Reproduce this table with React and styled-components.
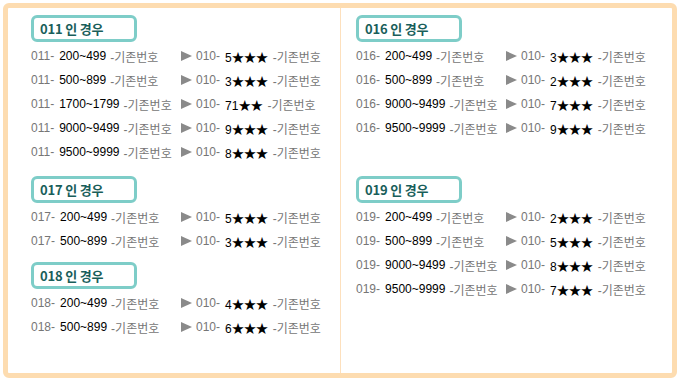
import React from "react";
import styled, { createGlobalStyle } from "styled-components";

const GlobalStyle = createGlobalStyle`
  html, body {
    margin: 0;
    padding: 0;
    background: #ffffff;
  }
  body {
    font-family: "Liberation Sans", "Noto Sans CJK KR", sans-serif;
  }
`;

const Frame = styled.div`
  margin: 3px;
  width: 674px;
  height: 375px;
  box-sizing: border-box;
  border: 5px solid #fddcb0;
  border-radius: 6px;
  display: grid;
  grid-template-columns: 333px 1fr;
  background: #fff;
`;

const Column = styled.div`
  display: flex;
  flex-direction: column;
  padding: 7px 0 0 ${(p) => p.$indent}px;
  border-right: ${(p) => (p.$divider ? "1px solid #fde0bd" : "none")};
`;

const Section = styled.section`
  margin-top: ${(p) => p.$top || 0}px;
`;

const Badge = styled.div`
  box-sizing: border-box;
  width: 106px;
  height: 27px;
  border: 3px solid #7ecdc8;
  border-radius: 6px;
  padding-left: 6px;
  margin-bottom: 2px;
  display: flex;
  align-items: center;
  font-family: "Noto Sans CJK KR", sans-serif;
  font-size: 13px;
  font-weight: 700;
  color: #195e5a;
  letter-spacing: -0.2px;
`;

const Row = styled.div`
  height: 24px;
  display: grid;
  grid-template-columns: 150px auto;
  align-items: center;
  font-size: 12px;
  color: #767676;
  white-space: nowrap;
`;

const Part = styled.span`
  display: flex;
  align-items: center;
`;

const Dark = styled.span`
  color: #000;
  margin: 0 ${(p) => p.$after || 0}px 0 ${(p) => p.$before || 0}px;
`;

const Arrow = styled.span`
  display: inline-block;
  width: 0;
  height: 0;
  border-top: 5.5px solid transparent;
  border-bottom: 5.5px solid transparent;
  border-left: 11px solid #8a8a8a;
  margin-right: 4px;
`;

const Stars = styled.span`
  font-family: "Noto Sans CJK KR", sans-serif;
  font-size: 12.5px;
  letter-spacing: -0.5px;
`;

const sections = {
  left: [
    {
      code: "011",
      top: 0,
      rows: [
        ["200~499", "5", "★★★"],
        ["500~899", "3", "★★★"],
        ["1700~1799", "71", "★★"],
        ["9000~9499", "9", "★★★"],
        ["9500~9999", "8", "★★★"],
      ],
    },
    {
      code: "017",
      top: 12,
      rows: [
        ["200~499", "5", "★★★"],
        ["500~899", "3", "★★★"],
      ],
    },
    {
      code: "018",
      top: 9,
      rows: [
        ["200~499", "4", "★★★"],
        ["500~899", "6", "★★★"],
      ],
    },
  ],
  right: [
    {
      code: "016",
      top: 0,
      rows: [
        ["200~499", "3", "★★★"],
        ["500~899", "2", "★★★"],
        ["9000~9499", "7", "★★★"],
        ["9500~9999", "9", "★★★"],
      ],
    },
    {
      code: "019",
      top: 36,
      rows: [
        ["200~499", "2", "★★★"],
        ["500~899", "5", "★★★"],
        ["9000~9499", "8", "★★★"],
        ["9500~9999", "7", "★★★"],
      ],
    },
  ],
};

const NumberSection = ({ code, top, rows }) => (
  <Section $top={top}>
    <Badge>{code} 인 경우</Badge>
    {rows.map(([range, head, stars]) => (
      <Row key={range}>
        <Part>
          {code}-<Dark $before={5} $after={4}>{range}</Dark>-기존번호
        </Part>
        <Part>
          <Arrow />
          010-
          <Dark $before={5} $after={5}>
            {head}
            <Stars>{stars}</Stars>
          </Dark>
          -기존번호
        </Part>
      </Row>
    ))}
  </Section>
);

export default function App() {
  return (
    <>
      <GlobalStyle />
      <Frame>
        <Column $indent={23} $divider>
          {sections.left.map((s) => (
            <NumberSection key={s.code} {...s} />
          ))}
        </Column>
        <Column $indent={15}>
          {sections.right.map((s) => (
            <NumberSection key={s.code} {...s} />
          ))}
        </Column>
      </Frame>
    </>
  );
}
